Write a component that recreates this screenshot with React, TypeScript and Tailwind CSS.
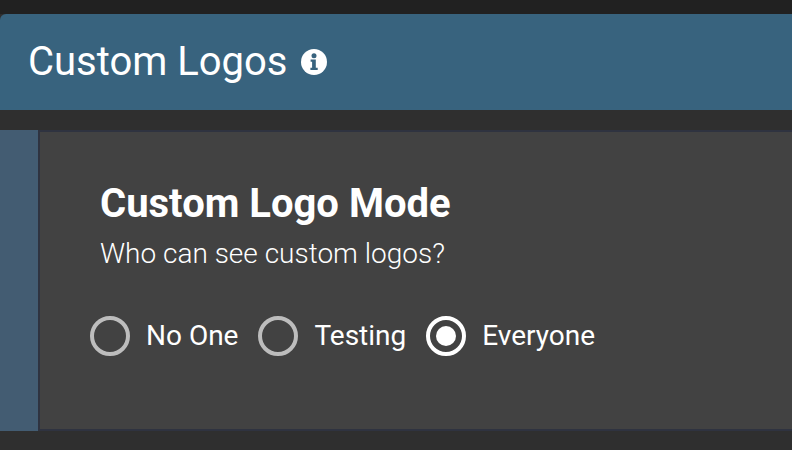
const options = [
  { label: "No One", checked: false },
  { label: "Testing", checked: false },
  { label: "Everyone", checked: true },
];

function Radio({ label, checked }: { label: string; checked: boolean }) {
  return (
    <label className="flex items-center gap-4">
      {checked ? (
        <span className="flex h-10 w-10 items-center justify-center rounded-full border-[4px] border-white">
          <span className="h-5 w-5 rounded-full bg-white" />
        </span>
      ) : (
        <span className="h-10 w-10 rounded-full border-[4px] border-[#bdbdbd]" />
      )}
      <span className="text-[28px] leading-10 text-white">{label}</span>
    </label>
  );
}

function InfoBadge() {
  return (
    <svg viewBox="0 0 26 26" className="ml-[13px] h-[26px] w-[26px]">
      <circle cx="13" cy="13" r="13" fill="#fff" />
      <circle cx="13" cy="6.8" r="2.5" fill="#38637e" />
      <path d="M9.6 10.5h5.2v8.3h1.9v2.2H9.4v-2.2h1.7v-6.1H9.6z" fill="#38637e" />
    </svg>
  );
}

export default function App() {
  return (
    <div className="flex h-[450px] w-[792px] flex-col overflow-hidden bg-[#2f2f2f] font-['Roboto',sans-serif]">
      <div className="h-[14px] shrink-0 bg-[#212121]" />
      <header className="flex h-[96px] shrink-0 items-center rounded-tl-[6px] bg-[#38637e] pl-[28px]">
        <h1 className="text-[40px] leading-none text-white">Custom Logos</h1>
        <InfoBadge />
      </header>
      <section className="mt-5 flex h-[301px] shrink-0">
        <div className="w-[38px] bg-[#435c72]" />
        <div className="flex-1 border-b-2 border-l-2 border-t-2 border-[#2f3340] bg-[#424242] pl-[60px] pt-[51px]">
          <h2 className="text-[40px] font-bold leading-[42px] text-white">Custom Logo Mode</h2>
          <p className="mt-[14px] text-[28px] font-light leading-[30px] text-white">Who can see custom logos?</p>
          <div className="-ml-[10px] mt-[47px] flex gap-5">
            {options.map((o) => (
              <Radio key={o.label} label={o.label} checked={o.checked} />
            ))}
          </div>
        </div>
      </section>
    </div>
  );
}
